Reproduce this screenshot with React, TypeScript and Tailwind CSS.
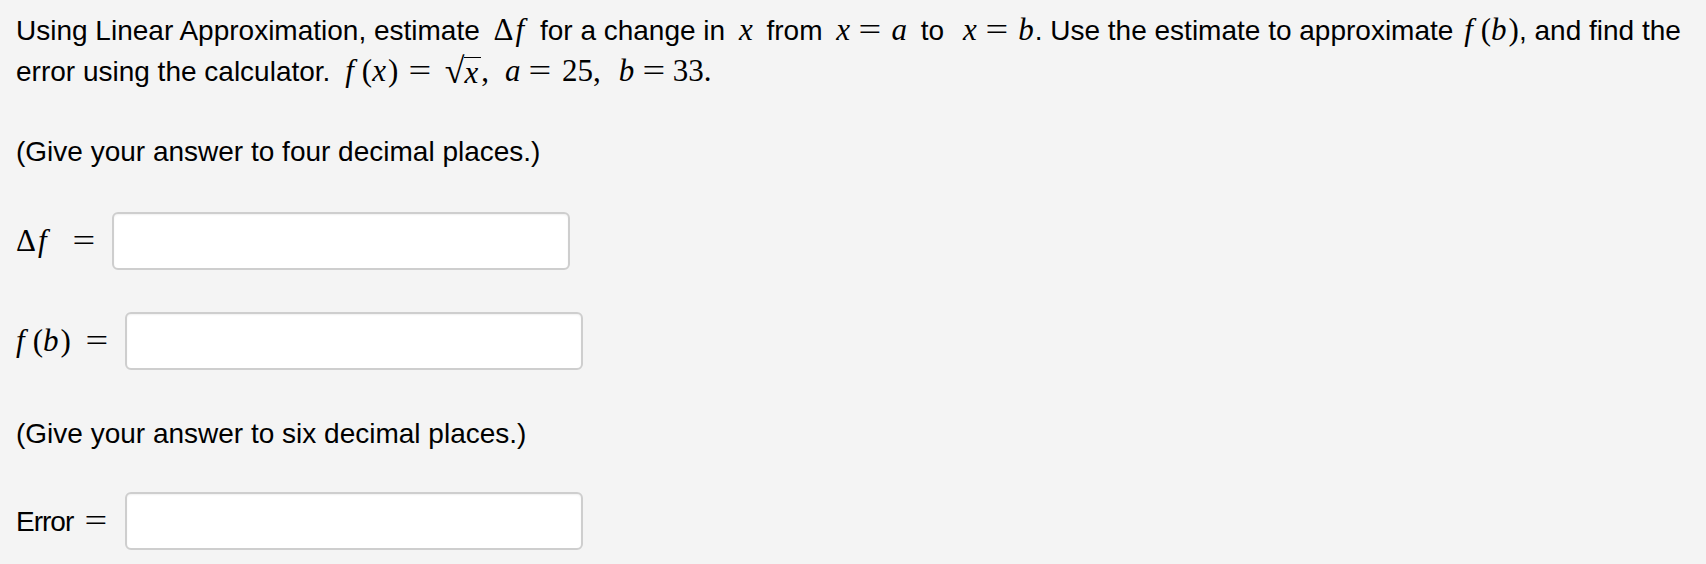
import React from "react";

const serif = "font-['Liberation_Serif','Times_New_Roman',serif] text-[31px]";

function V({ children, className = "" }: { children: React.ReactNode; className?: string }) {
  // italic math variable
  return <span className={`${serif} italic ${className}`}>{children}</span>;
}

function R({ children, className = "" }: { children: React.ReactNode; className?: string }) {
  // upright math symbol / number
  return <span className={`${serif} ${className}`}>{children}</span>;
}

function Eq({ className = "ml-[11px] mr-[13px]" }: { className?: string }) {
  return <span className={`${serif} inline-block scale-x-[1.3] ${className}`}>=</span>;
}

// f(b), f(x) ...
function Fn({ arg, className = "" }: { arg: string; className?: string }) {
  return (
    <span className={className}>
      <V>f</V>
      <R className="ml-[8px]">(</R>
      <V>{arg}</V>
      <R className="ml-[2px]">)</R>
    </span>
  );
}

function Sqrt({ children }: { children: React.ReactNode }) {
  return (
    <span className="inline-flex items-start align-[-2px]">
      <span className={`${serif} !text-[36px] leading-[38px]`}>√</span>
      <span className="border-t-[1.5px] border-black leading-[30px] mt-[5px] pr-[3px]">{children}</span>
    </span>
  );
}

function AnswerBox({ label, id }: { label: React.ReactNode; id: string }) {
  return (
    <div className="flex items-center">
      <label htmlFor={id} className="whitespace-nowrap mr-[20px]">
        {label}
      </label>
      <input
        id={id}
        type="text"
        className="w-[458px] h-[58px] rounded-[6px] border-2 border-[#cecece] bg-white px-3 text-[24px] shadow-[inset_0_1px_2px_rgba(0,0,0,0.06)] focus:outline-none"
      />
    </div>
  );
}

export default function App() {
  return (
    <div className="min-h-screen bg-[#f4f4f4] text-black font-['Liberation_Sans',Arial,sans-serif] text-[28px]">
      <div className="pl-[16px] pt-[10px]">
        <div className="leading-[40px]">
          <div className="whitespace-nowrap">
            Using Linear Approximation, estimate{" "}
            <span className="ml-[6px] mr-[5px]">
              <R>Δ</R>
              <V className="ml-[2px] mr-[3px]">f</V>
            </span>{" "}
            for a change in <V className="mx-[6px]">x</V> from{" "}
            <span className="mx-[6px]">
              <V>x</V>
              <Eq />
              <V>a</V>
            </span>{" "}
            to{" "}
            <span className="ml-[11px] mr-[1px]">
              <V>x</V>
              <Eq />
              <V>b</V>
            </span>
            . Use the estimate to approximate <Fn arg="b" className="ml-[3px]" />, and find the
          </div>
          <div className="whitespace-nowrap">
            error using the calculator. <Fn arg="x" className="ml-[7px]" />
            <Eq className="ml-[13px] mr-[16px]" />
            <Sqrt>
              <V>x</V>
            </Sqrt>
            <R>,</R>
            <V className="ml-[16px]">a</V>
            <Eq />
            <R>25,</R>
            <V className="ml-[18px]">b</V>
            <Eq className="ml-[11px] mr-[10px]" />
            <R>33.</R>
          </div>
        </div>

        <p className="leading-[40px] mt-[40px]">(Give your answer to four decimal places.)</p>

        <div className="mt-[40px]">
          <AnswerBox
            id="df"
            label={
              <>
                <R>Δ</R>
                <V className="ml-[2px]">f</V>
                <Eq className="ml-[28px]" />
              </>
            }
          />
        </div>

        <div className="mt-[42px]">
          <AnswerBox
            id="fb"
            label={
              <>
                <Fn arg="b" />
                <Eq className="ml-[17px]" />
              </>
            }
          />
        </div>

        <p className="leading-[40px] mt-[44px]">(Give your answer to six decimal places.)</p>

        <div className="mt-[38px]">
          <AnswerBox
            id="err"
            label={
              <>
                <span className="tracking-[-1px]">Error</span>
                <Eq className="ml-[14px]" />
              </>
            }
          />
        </div>
      </div>
    </div>
  );
}
